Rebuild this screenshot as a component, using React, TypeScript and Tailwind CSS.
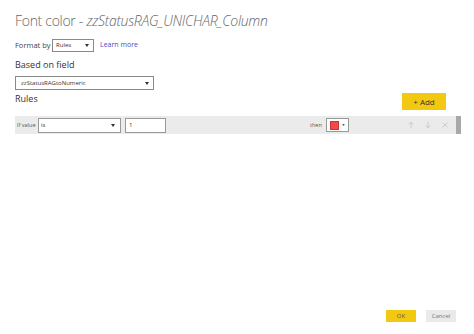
import React from "react";

const Caret = () => (
  <svg width="4" height="3" viewBox="0 0 4 3" className="shrink-0">
    <path d="M0 0 L4 0 L2 3 Z" fill="#333" />
  </svg>
);

export default function App() {
  return (
    <div
      className="w-[474px] h-[334px] bg-white flex flex-col px-[15px] text-[#333]"
      style={{ fontFamily: '"Open Sans", "Noto Sans", sans-serif' }}
    >
      <div className="pt-[11px] text-[14px] leading-[20px] font-light text-[#666] tracking-[-0.3px] whitespace-nowrap">
        Font color - <span className="italic">zzStatusRAG_UNICHAR_Column</span>
      </div>

      <div className="flex items-center mt-[8px] h-[13px] whitespace-nowrap">
        <span className="text-[7.5px] text-[#444] w-[37px]">Format by</span>
        <div className="w-[42px] h-[13px] border border-[#8a8a8a] bg-white flex items-center justify-between pl-[3px] pr-[4px]">
          <span className="text-[6px] text-[#333]">Rules</span>
          <Caret />
        </div>
        <span className="ml-[6px] text-[7px] text-[#4b4bc4]">Learn more</span>
      </div>

      <div className="mt-[7px] text-[9px] leading-[12px] text-[#333]">Based on field</div>

      <div className="mt-[5px] w-[139px] h-[14px] border border-[#8a8a8a] bg-white flex items-center justify-between pl-[5px] pr-[4px]">
        <span className="text-[6px] text-[#333]">zzStatusRAGtoNumeric</span>
        <Caret />
      </div>

      <div className="flex items-end justify-between mt-[3px]">
        <span className="text-[9px] leading-[12px] mb-[5px] text-[#333]">Rules</span>
        <div className="w-[44px] h-[17px] bg-[#f2c811] flex items-center justify-center text-[8px] text-[#333] mr-[13px]">
          + Add
        </div>
      </div>

      <div className="mt-[6px] flex w-[446px] h-[18px]">
        <div className="flex-1 bg-[#ebebeb] flex items-center pl-[2px] whitespace-nowrap">
          <span className="text-[5.5px] text-[#555] w-[21px]">If value</span>
          <div className="w-[83px] h-[15px] border border-[#999] bg-white flex items-center justify-between pl-[2px] pr-[5px]">
            <span className="text-[6px] text-[#333]">is</span>
            <Caret />
          </div>
          <div className="ml-[4px] w-[41px] h-[15px] border border-[#999] bg-white flex items-center pl-[3px]">
            <span className="text-[6px] text-[#333]">1</span>
          </div>
          <span className="ml-[144px] text-[5.5px] text-[#555] w-[16px]">then</span>
          <div className="w-[23px] h-[14px] border border-[#999] bg-white flex items-center pl-[3px] gap-[3px]">
            <div className="w-[9px] h-[9px] bg-[#f04a4a] border border-[#c33]" />
            <svg width="3" height="2" viewBox="0 0 4 3">
              <path d="M0 0 L4 0 L2 3 Z" fill="#555" />
            </svg>
          </div>
          <div className="ml-[58px] flex items-center gap-[9px]">
            <svg width="8" height="8" viewBox="0 0 8 8" fill="none" stroke="#c4c4c4" strokeWidth="0.8">
              <path d="M4 7.5 V1 M1.5 3.5 L4 1 L6.5 3.5" />
            </svg>
            <svg width="8" height="8" viewBox="0 0 8 8" fill="none" stroke="#c4c4c4" strokeWidth="0.8">
              <path d="M4 0.5 V7 M1.5 4.5 L4 7 L6.5 4.5" />
            </svg>
            <svg width="8" height="8" viewBox="0 0 8 8" fill="none" stroke="#c4c4c4" strokeWidth="0.8">
              <path d="M1.5 1.5 L6.5 6.5 M6.5 1.5 L1.5 6.5" />
            </svg>
          </div>
        </div>
        <div className="w-[5px] bg-[#a8a8a8]" />
      </div>

      <div className="flex-1" />

      <div className="flex justify-end gap-[10px] mr-[3px] mb-[12px]">
        <div className="w-[30px] h-[12px] bg-[#f2c811] flex items-center justify-center text-[6px] text-[#555]">OK</div>
        <div className="w-[30px] h-[12px] bg-[#eaeaea] flex items-center justify-center text-[6px] text-[#777]">Cancel</div>
      </div>
    </div>
  );
}
